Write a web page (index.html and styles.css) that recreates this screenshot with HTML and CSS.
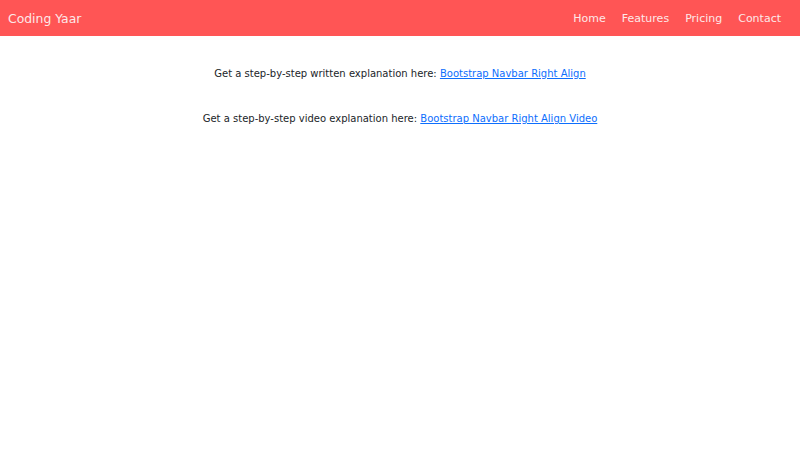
FILE: index.html
```html
<!DOCTYPE html>
<html>
<head>
<meta charset="utf-8">
<link rel="stylesheet" href="styles.css">
</head>
<body>
<nav class="navbar">
  <a class="brand" href="#">Coding Yaar</a>
  <ul class="nav-links">
    <li><a href="#">Home</a></li>
    <li><a href="#">Features</a></li>
    <li><a href="#">Pricing</a></li>
    <li><a href="#">Contact</a></li>
  </ul>
</nav>
<main class="content">
  <p>Get a step-by-step written explanation here: <a href="#">Bootstrap Navbar Right Align</a></p>
  <p>Get a step-by-step video explanation here: <a href="#">Bootstrap Navbar Right Align Video</a></p>
</main>
</body>
</html>
```
FILE: styles.css
```css
* { box-sizing: border-box; }
body {
  margin: 0;
  font-family: "DejaVu Sans", sans-serif;
  font-size: 10px;
  color: #212529;
  background: #fff;
}
.navbar {
  height: 36px;
  background: #ff5555;
  display: flex;
  align-items: center;
  justify-content: space-between;
  padding: 0 19px 0 8px;
}
.brand {
  color: #fde8e8;
  text-decoration: none;
  font-size: 12.4px;
}
.nav-links {
  list-style: none;
  margin: 0;
  padding: 0;
  display: flex;
  gap: 16px;
}
.nav-links a {
  color: #fde8e8;
  text-decoration: none;
  font-size: 11px;
}
.content {
  text-align: center;
  padding-top: 30px;
}
.content p {
  margin: 0 0 30px;
  line-height: 15px;
}
.content a {
  color: #0d6efd;
}
```
